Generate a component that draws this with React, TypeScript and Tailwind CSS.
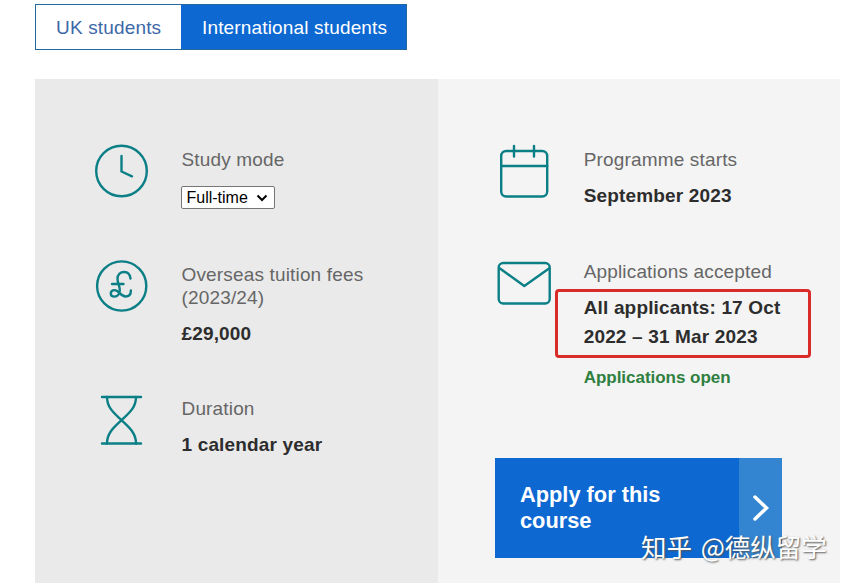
import type { ReactNode } from 'react'

interface FactProps {
  icon: ReactNode
  label: string
  className?: string
  children: ReactNode
}

function Icon({ children }: { children: ReactNode }) {
  return (
    <svg
      viewBox="0 0 60 60"
      className="h-[60px] w-[60px] shrink-0 text-[#0b7f86]"
      fill="none"
      stroke="currentColor"
      strokeWidth="2.4"
      strokeLinecap="round"
      strokeLinejoin="round"
    >
      {children}
    </svg>
  )
}

function ClockIcon() {
  return (
    <Icon>
      <circle cx="30.5" cy="30" r="25.3" />
      <path d="M30.5 15v15.5l10.5 4.8" />
    </Icon>
  )
}

function PoundIcon() {
  return (
    <Icon>
      <circle cx="30.7" cy="30" r="24.6" />
      <path d="M39.5 22.5c-.5-4-3-6.500-6.300-6.500-4 0-6.700 2.800-6.700 6.800 0 4.500 2.300 7 2.300 11.200 0 3.800-2.200 6.600-5.400 6.600-2.200 0-3.600-1.300-3.600-3.200s1.500-3.300 3.800-3.300c4.400 0 6 6.400 11 6.400 3.400 0 5.300-2.200 5.300-6" />
      <path d="M21 28h11.500" />
    </Icon>
  )
}

function HourglassIcon() {
  return (
    <Icon>
      <path d="M11 7h39M11 53.5h39" />
      <path d="M16 7C16 18 23.5 23.5 30.5 30.2S45 42.5 45 53.5M45 7C45 18 37.5 23.5 30.5 30.2S16 42.5 16 53.5" />
    </Icon>
  )
}

function CalendarIcon() {
  return (
    <Icon>
      <rect x="7.2" y="10" width="46" height="45.5" rx="5" />
      <path d="M7.2 25h46M20 5v10.5M40 5v10.5" />
    </Icon>
  )
}

function MailIcon() {
  return (
    <Icon>
      <rect x="4.7" y="10" width="51" height="40.5" rx="4.5" />
      <path d="M6 15.5L30.3 33 55 15.5" />
    </Icon>
  )
}

function Fact({ icon, label, className, children }: FactProps) {
  return (
    <div className={`flex ${className ?? ''}`}>
      {icon}
      <div className="flex-1 pt-[7px] text-[19px] tracking-[0.16px]">
        <div className="leading-[23px] text-[#666]">{label}</div>
        {children}
      </div>
    </div>
  )
}

function Value({ children }: { children: ReactNode }) {
  return <div className="pt-[10px] leading-[29px] font-bold text-[#2d2d2d]">{children}</div>
}

export default function App() {
  return (
    <div className="relative h-[583px] w-[850px] overflow-hidden bg-white pt-1 pl-[35px] font-['Liberation_Sans',Arial,sans-serif]">
      <div className="flex h-[46px] w-[372px] border border-[#23699f] text-[19px] leading-[46px] tracking-[0.16px]">
        <button className="w-[145px] pl-[20px] text-left text-[#3d68a8]">UK students</button>
        <button className="flex-1 bg-[#0d68d2] pl-[21px] text-left text-white">International students</button>
      </div>

      <div className="mt-[29px] flex h-[504px] w-[805px]">
        <section className="w-[403px] bg-[#eaeaea] pt-[62px] pl-[56px]">
          <Fact icon={<ClockIcon />} label="Study mode" className="h-[115px] gap-[30.5px]">
            <div className="mt-[15px] -ml-[0.5px] flex h-[23px] w-[94px] items-center justify-between rounded-[2px] border border-[#767676] bg-white pr-[6px] pl-[4.5px] text-[16px] tracking-normal text-black">
              <span className="pt-px">Full-time</span>
              <svg viewBox="0 0 12 8" className="h-2 w-3" fill="none" stroke="black" strokeWidth="2">
                <path d="M1.5 1.5L6 6l4.5-4.5" />
              </svg>
            </div>
          </Fact>
          <Fact icon={<PoundIcon />} label="Overseas tuition fees (2023/24)" className="h-[134px] gap-[30.5px] pr-8">
            <Value>£29,000</Value>
          </Fact>
          <Fact icon={<HourglassIcon />} label="Duration" className="gap-[30.5px]">
            <Value>1 calendar year</Value>
          </Fact>
        </section>

        <section className="w-[402px] bg-[#f4f4f4] pt-[62px] pl-[56px]">
          <Fact icon={<CalendarIcon />} label="Programme starts" className="h-[112px] gap-[29.7px]">
            <Value>September 2023</Value>
          </Fact>
          <Fact icon={<MailIcon />} label="Applications accepted" className="h-[205px] gap-[29.7px]">
            <div className="relative">
              <Value>
                All applicants: 17 Oct
                <br />
                2022 – 31 Mar 2023
              </Value>
              <div className="absolute top-[6px] -left-[28.7px] h-[69px] w-[256px] rounded-[4px] border-3 border-[#d92c28]" />
            </div>
            <div className="mt-[15px] text-[17px] leading-[23px] font-bold tracking-[-0.03px] text-[#2f8040]">
              Applications open
            </div>
          </Fact>
          <button className="ml-px flex h-[100px] w-[287px] bg-[#0d68d2] text-left text-[21.8px] leading-[26px] font-bold text-white">
            <span className="w-[244px] pt-[24px] pr-12 pl-[25px]">Apply for this course</span>
            <span className="flex h-full flex-1 items-center justify-center bg-[#3385d2]">
              <svg viewBox="0 0 18 28" className="h-7 w-[18px]" fill="none" stroke="white" strokeWidth="3.5" strokeLinecap="round">
                <path d="M3 3L14.5 14 3 25" />
              </svg>
            </span>
          </button>
        </section>
      </div>

      <div className="absolute top-[528px] left-[641px] font-['Noto_Sans_CJK_SC',sans-serif] text-[25.5px] leading-[36px] whitespace-nowrap text-white [word-spacing:3px] [text-shadow:1px_1px_2px_#555]">
        知乎 @德纵留学
      </div>
    </div>
  )
}
